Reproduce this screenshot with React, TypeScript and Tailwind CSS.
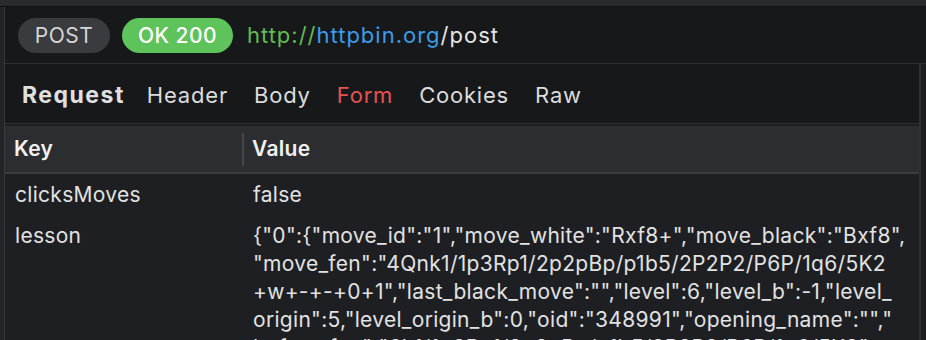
const TABS = [
  { id: 'header',  label: 'Header' },
  { id: 'body',    label: 'Body' },
  { id: 'form',    label: 'Form' },
  { id: 'cookies', label: 'Cookies' },
  { id: 'raw',     label: 'Raw' },
]

// wrapped the way the panel wraps it
const LESSON = [
  '{"0":{"move_id":"1","move_white":"Rxf8+","move_black":"Bxf8",',
  '"move_fen":"4Qnk1/1p3Rp1/2p2pBp/p1b5/2P2P2/P6P/1q6/5K2',
  '+w+-+-+0+1","last_black_move":"","level":6,"level_b":-1,"level_',
  'origin":5,"level_origin_b":0,"oid":"348991","opening_name":"","',
  'before_fen":"6k1/1p3Rp1/2p2pBp/p1b5/2P2P2/P6P/1q6/5K2",',
]

const ROWS = [
  { key: 'clicksMoves', lines: ['false'] },
  { key: 'lesson',      lines: LESSON },
]

export default function App() {
  const active = 'form'

  return (
    <div className="w-[926px] h-[340px] overflow-hidden bg-[#2a2b2e] flex flex-col font-['Inter',sans-serif] text-[#e3e3e3]">
      {/* window strip */}
      <div className="h-[6px] shrink-0 border-b border-[#101113] box-content" />

      <div className="flex flex-1 min-h-0">
        <div className="w-[5px] shrink-0 bg-[#232427] border-r border-[#38393c]" />

        <div className="flex-1 min-w-0 flex flex-col bg-[#17181a]">
          {/* status line */}
          <div className="h-[57px] shrink-0 flex items-center pl-[13px] pt-[1px] gap-[12px] border-b border-[#2e2f32]">
            <span className="h-[35px] w-[92px] rounded-full bg-[#3a3b3e] flex items-center justify-center text-[21px] tracking-[0.5px] text-[#d6d6d6]">POST</span>
            <span className="h-[35px] w-[111px] rounded-full bg-[#5dc35a] flex items-center justify-center text-[21px] tracking-[0.5px] font-medium text-white">OK 200</span>
            <span className="ml-[2px] text-[22px] tracking-[1px]">
              <span className="text-[#62bd50]">http://</span>
              <span className="text-[#3d9be8]">httpbin.org</span>
              <span className="text-[#e6e6e6]">/post</span>
            </span>
          </div>

          <div className="flex flex-1 min-h-0">
            <div className="flex-1 min-w-0 flex flex-col">
              {/* tabs */}
              <div className="h-[60px] shrink-0 flex items-center pl-[17px] pt-[4px] gap-[22px] text-[22px] border-b border-[#2e2f32]">
                <span className="font-bold text-[23px] tracking-[1.5px] text-[#e0e0e0]">Request</span>
                <div className="flex items-center gap-[26px] tracking-[0.8px]">
                  {TABS.map(t => (
                    <span key={t.id} className={t.id === active ? 'text-[#e5534f]' : 'text-[#dcdcdc]'}>{t.label}</span>
                  ))}
                </div>
              </div>

              {/* key / value table */}
              <div className="flex-1 min-h-0 bg-[#1e1f22] flex flex-col">
                <div className="h-[48px] shrink-0 flex items-center bg-[#2c2d31] border-b-2 border-[#3b3c40] text-[21px] tracking-[0.3px] font-semibold text-[#f2f2f2] mt-[2px]">
                  <div className="w-[237px] pl-[9px]">Key</div>
                  <div className="w-[2px] h-[33px] bg-[#46474b]" />
                  <div className="pl-[8px]">Value</div>
                </div>
                {ROWS.map(r => (
                  <div key={r.key} className="flex pt-[7px] pb-[6px] text-[21px] tracking-[0.3px] leading-[28px] text-[#e2e2e2]">
                    <div className="w-[239px] shrink-0 pl-[10px]">{r.key}</div>
                    <div className="flex-1 min-w-0 pl-[9px] overflow-hidden">
                      {r.lines.map((l, i) => (
                        <div key={i} className="whitespace-nowrap">{l}</div>
                      ))}
                    </div>
                  </div>
                ))}
              </div>
            </div>
            <div className="w-[5px] shrink-0 bg-[#1c1d1f] border-l-2 border-[#2f3033] box-content" />
          </div>
        </div>
      </div>
    </div>
  )
}
